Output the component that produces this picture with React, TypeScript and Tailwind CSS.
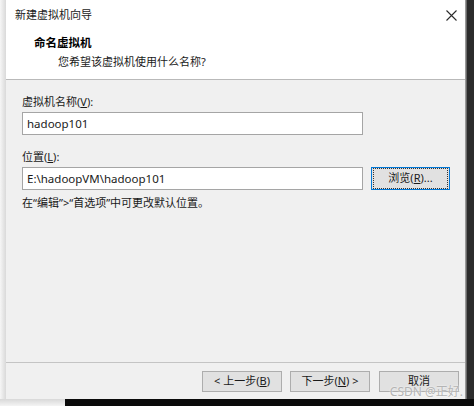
import React from 'react';

const font = 'font-[Noto_Sans,Noto_Sans_CJK_SC,sans-serif]';

const CloseIcon: React.FC = () => (
  <svg width="11" height="11" viewBox="0 0 11 11" className="block">
    <path d="M0.5 0.5 L10.5 10.5 M10.5 0.5 L0.5 10.5" stroke="#2b2b2b" strokeWidth="1.1" fill="none" />
  </svg>
);

const Button: React.FC<{ children: React.ReactNode; focused?: boolean; className?: string }> = ({
  children,
  focused,
  className = '',
}) => (
  <div
    className={`h-[21px] flex items-center justify-center bg-[#e1e1e1] text-[11px] text-[#1a1a1a] border ${
      focused ? 'border-[#0078d7]' : 'border-[#adadad]'
    } ${className}`}
  >
    <div
      className={`flex items-center justify-center w-full h-full ${
        focused ? 'border border-dotted border-[#333] m-[1px]' : ''
      }`}
    >
      {children}
    </div>
  </div>
);

const Field: React.FC<{ value: string }> = ({ value }) => (
  <div className="w-[341px] h-[23px] bg-white border border-[#a5a5a5] flex items-center px-[4px] text-[11.5px] text-[#1a1a1a]">
    {value}
  </div>
);

export default function App() {
  return (
    <div className={`w-[474px] h-[406px] flex flex-col overflow-hidden bg-[#0a0a0a] ${font}`}>
      <div className="flex h-[399px]">
        {/* window shadow on the left */}
        <div className="w-[6px] bg-gradient-to-r from-[#f6f6f6] to-[#d9d9d9]" />

        {/* dialog */}
        <div className="relative w-[460px] flex flex-col bg-[#f0f0f0] border-r border-[#9a9a9a]">
          <div className="h-[80px] bg-white border-b border-[#b9b9b9] flex flex-col">
            <div className="h-[30px] flex items-center justify-between pl-[9px] pr-[8px]">
              <span className="text-[11px] leading-[16px] text-[#1a1a1a]">新建虚拟机向导</span>
              <CloseIcon />
            </div>
            <div className="mt-[5px] pl-[28px] text-[11.5px] leading-[16px] font-bold text-black">命名虚拟机</div>
            <div className="mt-[3px] pl-[52px] text-[11px] leading-[16px] text-[#1a1a1a]">
              您希望该虚拟机使用什么名称?
            </div>
          </div>

          <div className="flex-1 flex flex-col pl-[16px] pt-[14px] text-[#1a1a1a]">
            <div className="text-[11px] leading-[16px]">
              虚拟机名称(<span className="underline">V</span>):
            </div>
            <div className="mt-[2px]">
              <Field value="hadoop101" />
            </div>

            <div className="mt-[14px] text-[11px] leading-[16px]">
              位置(<span className="underline">L</span>):
            </div>
            <div className="mt-[2px] flex items-center gap-[8px]">
              <Field value="E:\hadoopVM\hadoop101" />
              <Button focused className="w-[79px] h-[23px]">
                浏览(<span className="underline">R</span>)...
              </Button>
            </div>

            <div className="mt-[5px] text-[11px] leading-[16px]">在“编辑”&gt;“首选项”中可更改默认位置。</div>
          </div>

          <div className="h-[37px] border-t border-[#c4c4c4] flex justify-end items-start pt-[8px] pr-[6px] gap-[8px]">
            <Button className="w-[80px]">
                &lt; 上一步(<span className="underline">B</span>)
            </Button>
            <Button className="w-[80px]">
              下一步(<span className="underline">N</span>) &gt;
            </Button>
            <Button className="w-[80px] ml-[1px]">取消</Button>
          </div>

          <span className="absolute right-[2px] bottom-[0px] text-[12px] leading-[14px] text-[#b4b4b4] [text-shadow:0_0_2px_#fff]">
            CSDN @正好.
          </span>
        </div>

        {/* desktop behind the window */}
        <div className="flex-1 bg-[#2c2c2c] border-l border-[#6a6a6a]" />
      </div>

      <div className="flex h-[7px]">
        <div className="w-[65px] bg-gradient-to-b from-[#d8d8d8] to-[#f4f4f4]" />
        <div className="flex-1 bg-[#0a0a0a]" />
      </div>
    </div>
  );
}
